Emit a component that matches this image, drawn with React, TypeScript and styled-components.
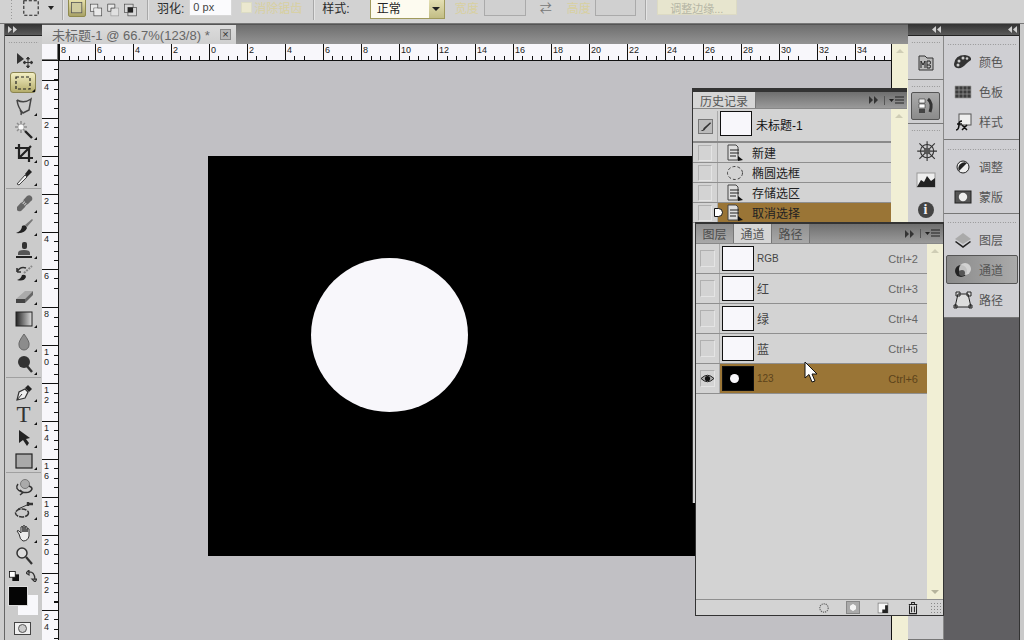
import React from 'react';
import styled, { createGlobalStyle } from 'styled-components';

const GlobalStyle = createGlobalStyle`
    html, body { margin: 0; padding: 0; background: #c1c0c4; }
    * { box-sizing: border-box; }
`;

const FONT = `"Liberation Sans", "Noto Sans CJK SC", sans-serif`;

const Icon = ({ size = 20, children }: { size?: number, children: React.ReactNode }) => (
    <svg width={size} height={size} viewBox="0 0 20 20">{children}</svg>
);

// ---- toolbox drawings
const toolIcons: { [key: string]: React.ReactNode } = {
    move: <><path d="M3 3 L3 14 L10 9 Z" fill="#333" /><path d="M14 8 V17 M10 12.5 H18 M14 7 L12.5 9 H15.5 Z M14 18 L12.5 16 H15.5 Z M9 12.5 L11 11 V14 Z M19 12.5 L17 11 V14 Z" stroke="#333" strokeWidth="1" fill="#333" /></>,
    marquee: <rect x="3" y="4" width="14" height="12" fill="none" stroke="#222" strokeWidth="1.2" strokeDasharray="3 2" />,
    lasso: <path d="M3 4 Q10 8 17 3 L15 14 L9 17 Q4 12 3 4 M6 14 Q8 16 7 19" fill="none" stroke="#444" strokeWidth="1.5" />,
    wand: <><path d="M11 11 L18 18" stroke="#222" strokeWidth="2.4" /><path d="M7 1 V13 M1 7 H13 M3 3 L11 11 M11 3 L3 11" stroke="#8f8f8f" strokeWidth="1.5" /><circle cx="7" cy="7" r="2.6" fill="#fafafa" /></>,
    crop: <path d="M5 1 V15 H19 M1 5 H15 V19 M5 15 L17 3" fill="none" stroke="#222" strokeWidth="2.2" />,
    dropper: <><path d="M3 17 L11 8 L13 10 L5 18 Z" fill="#eee" stroke="#444" /><path d="M11 7 L15 2 L18 5 L13 10 Z" fill="#222" /></>,
    heal: <><path d="M3 14 L13 3 Q16 1 18 4 Q19 7 17 8 L7 18 Q4 19 3 17 Z" fill="#666" /><path d="M8 8 L13 13" stroke="#ccc" strokeWidth="3" strokeDasharray="1 1" /></>,
    brush: <><path d="M11 9 L18 3 L19 4 L13 11 Z" fill="#777" /><path d="M2 17 Q8 15 8 10 Q12 8 13 12 Q11 18 2 17 Z" fill="#222" /></>,
    stamp: <><rect x="8" y="2" width="5" height="7" rx="2" fill="#333" /><path d="M4 13 Q4 10 10 10 Q16 10 16 13 V15 H4 Z" fill="#555" /><rect x="2" y="16" width="16" height="2" fill="#222" /></>,
    historyBrush: <><path d="M3 17 Q7 16 8 12 Q12 11 12 14 Q10 19 3 17 Z" fill="#222" /><path d="M10 10 L18 3" stroke="#888" strokeWidth="2" strokeDasharray="2 1" /><path d="M3 9 Q6 3 12 5 M3 9 L3 5 M3 9 L7 9" fill="none" stroke="#333" strokeWidth="1.6" /></>,
    eraser: <><path d="M2 13 L11 5 H19 L11 13 Z" fill="#aaa" /><path d="M2 13 H11 V17 H2 Z" fill="#444" /><path d="M11 13 L19 5 V9 L11 17 Z" fill="#666" /></>,
    gradient: <><defs><linearGradient id="grad" x1="0" x2="1"><stop offset="0" stopColor="#222" /><stop offset="1" stopColor="#ddd" /></linearGradient></defs><rect x="2" y="3" width="16" height="14" fill="url(#grad)" stroke="#222" /></>,
    blur: <path d="M10 2 Q16 10 15 13 A5 5 0 0 1 5 13 Q4 10 10 2 Z" fill="#8c8c8c" stroke="#666" />,
    burn: <><circle cx="10" cy="7" r="6" fill="#333" /><path d="M13 11 L18 17" stroke="#333" strokeWidth="2.5" /></>,
    pen: <><path d="M3 17 L5 9 L11 6 L14 9 L11 15 Z" fill="#eee" stroke="#333" strokeWidth="1.2" /><path d="M11 5 L14 2 L18 6 L15 9 Z" fill="#222" /><path d="M3 17 L8 11" stroke="#333" /></>,
    pathSelect: <path d="M5 2 L5 15 L9 12 L13 18 L15 15 L12 11 L16 10 Z" fill="#222" />,
    rect: <rect x="2" y="3" width="16" height="14" fill="#a9a9a9" stroke="#222" strokeWidth="1.2" />,
    rotate3d: <><circle cx="11" cy="6" r="4.5" fill="#aaa" stroke="#777" /><path d="M4 6 Q0 11 8 14 Q16 16 18 11 Q18 9 15 8 M6 12 L9 14.5 L6 17" fill="none" stroke="#333" strokeWidth="1.5" /></>,
    orbit3d: <><ellipse cx="8" cy="13" rx="6.5" ry="4" fill="none" stroke="#333" strokeWidth="1.5" strokeDasharray="5 1" /><path d="M13 4 H19 M14 2 V6" stroke="#333" strokeWidth="2.4" /><path d="M4 9 L13 5" stroke="#333" /></>,
    hand: <path d="M5 11 L3 8 Q4 7 5 8 L7 10 V4 Q8 3 9 4 V9 V3 Q10 2 11 3 V9 V4 Q12 3 13 4 V9 V6 Q14 5 15 6 V13 Q14 18 9 18 Q6 17 5 11 Z" fill="#eee" stroke="#333" />,
    zoom: <><circle cx="8" cy="7" r="5" fill="#ddd" stroke="#333" strokeWidth="1.5" /><path d="M12 11 L18 18" stroke="#333" strokeWidth="2.2" /></>,
};

type ToolDef = [string, boolean];

const toolGroups: { rowHeight: number, top: number, tools: ToolDef[] }[] = [
    { rowHeight: 23.4, top: 4, tools: [['move', false], ['marquee', true], ['lasso', true], ['wand', true], ['crop', true], ['dropper', true]] },
    { rowHeight: 23.1, top: 2.5, tools: [['heal', true], ['brush', true], ['stamp', true], ['historyBrush', true], ['eraser', true], ['gradient', true], ['blur', true], ['burn', true]] },
    { rowHeight: 22.8, top: 3.6, tools: [['pen', true], ['type', true], ['pathSelect', true], ['rect', true]] },
    { rowHeight: 22.8, top: 2.8, tools: [['rotate3d', true], ['orbit3d', true], ['hand', true], ['zoom', false]] },
];

const modeIcons: React.ReactNode[] = [
    <rect x="3" y="3" width="13" height="13" fill="#cfcba0" stroke="#555" />,
    <><rect x="1" y="1" width="11" height="11" fill="#e8e8e8" stroke="#444" /><rect x="6" y="7" width="12" height="12" fill="#e8e8e8" stroke="#444" /><rect x="6.5" y="7.5" width="5" height="4" fill="#e8e8e8" /></>,
    <><rect x="6" y="7" width="12" height="12" fill="#e0e0e0" stroke="#999" /><path d="M1 12 V1 H12 V7 H6 V12 Z" fill="#e8e8e8" stroke="#333" /></>,
    <><rect x="1" y="1" width="13" height="13" fill="#d8d8d8" stroke="#444" /><rect x="6" y="6" width="13" height="13" fill="#d8d8d8" stroke="#444" /><rect x="6" y="6" width="8" height="8" fill="#222" /></>,
];

const Arrows = ({ left }: { left?: boolean }) => (
    <svg width="9" height="7" viewBox="0 0 9 7">
        <path d={left ? 'M4 0 L0 3.5 L4 7 Z M9 0 L5 3.5 L9 7 Z' : 'M0 0 L4 3.5 L0 7 Z M5 0 L9 3.5 L5 7 Z'} fill="#d0d0d0" />
    </svg>
);

const PanelMenu = () => (
    <PanelControls>
        <svg width="9" height="8" viewBox="0 0 9 8"><path d="M0 0 L4 4 L0 8 Z M5 0 L9 4 L5 8 Z" fill="#333" /></svg>
        <ControlSep />
        <svg width="15" height="9" viewBox="0 0 15 9"><path d="M0 3 H5 L2.5 6 Z" fill="#222" /><path d="M6 1 H15 M6 4 H15 M6 7 H15" stroke="#222" strokeWidth="1.2" /></svg>
    </PanelControls>
);

const HRULER = [8, 6, 4, 2, 0, 2, 4, 6, 8, 10, 12, 14, 16, 18, 20, 22, 24, 26, 28, 30, 32, 34];
const VRULER = [4, 2, 0, 2, 4, 6, 8, 10, 12, 14, 16, 18, 20, 22, 24];

const HISTORY = [
    { label: '新建', kind: 'doc' },
    { label: '椭圆选框', kind: 'ellipse' },
    { label: '存储选区', kind: 'doc' },
    { label: '取消选择', kind: 'doc', active: true },
];

const CHANNELS = [
    { name: 'RGB', key: 'Ctrl+2' },
    { name: '红', key: 'Ctrl+3', cjk: true },
    { name: '绿', key: 'Ctrl+4', cjk: true },
    { name: '蓝', key: 'Ctrl+5', cjk: true },
    { name: '123', key: 'Ctrl+6', selected: true },
];

const DocIcon = () => (
    <svg width="18" height="18" viewBox="0 0 18 18">
        <path d="M2 1 H10 L12 3 V16 H2 Z" fill="#ddd" stroke="#444" />
        <path d="M4 6 H13 M4 9 H13 M4 12 H10" stroke="#222" strokeWidth="1.2" />
        <path d="M12 12 L17 16 L12 17 Z" fill="#111" />
    </svg>
);

const EllipseIcon = () => (
    <svg width="18" height="18" viewBox="0 0 18 18">
        <ellipse cx="9" cy="9" rx="7.5" ry="6.5" fill="none" stroke="#444" strokeDasharray="3 2" />
    </svg>
);

const dockColors = [
    { label: '颜色', icon: <><path d="M1 12 Q2 3 12 3 Q19 4 18 8 Q15 10 13 12 Q9 17 4 16 Q1 15 1 12 Z" fill="#333" /><circle cx="6" cy="9" r="1.5" fill="#ccc" /><circle cx="10" cy="6" r="1.5" fill="#ccc" /><circle cx="14" cy="6.5" r="1.3" fill="#ccc" /><circle cx="5" cy="13" r="1.5" fill="#ccc" /></> },
    { label: '色板', icon: <path d="M2 4 H18 V16 H2 Z M6 4 V16 M10 4 V16 M14 4 V16 M2 8 H18 M2 12 H18" fill="#3c3c3c" stroke="#999" strokeWidth="0.7" /> },
    { label: '样式', icon: <><rect x="6" y="2" width="12" height="11" fill="#eee" stroke="#555" /><path d="M3 18 Q6 18 6 12 Q6 9 9 9 M4 12 H9 M9 13 L14 18 M14 13 L9 18" fill="none" stroke="#111" strokeWidth="1.5" /></> },
];

const dockAdjust = [
    { label: '调整', icon: <><circle cx="10" cy="10" r="6" fill="#eee" stroke="#222" /><path d="M14 6 A6 6 0 0 0 6 14 Z" fill="#222" /></> },
    { label: '蒙版', icon: <><rect x="2" y="4" width="16" height="12" fill="#555" stroke="#222" /><circle cx="10" cy="10" r="4.2" fill="#eee" /></> },
];

const dockLayers = [
    { label: '图层', icon: <><path d="M10 3 L18 9 L10 14 L2 9 Z" fill="#aaa" /><path d="M3 11 L10 16 L17 11 L18 12 L10 18 L2 12 Z" fill="#222" /></> },
    { label: '通道', icon: <><circle cx="8" cy="11" r="6" fill="#222" /><circle cx="12" cy="9" r="6" fill="#ddd" opacity="0.85" /><circle cx="9" cy="13" r="3" fill="#555" /></>, active: true },
    { label: '路径', icon: <path d="M2 17 L5 4 H15 L18 17 Z M1 15 H4 V18 H1 Z M16 15 H19 V18 H16 Z M3 2 H7 V6 H3 Z M14 2 H18 V6 H14 Z" fill="#ddd" stroke="#222" strokeWidth="1" /> },
];

const App = () => {
    return (
        <Page>
            <GlobalStyle />
            <OptionBar>
                <Grip />
                <Icon size={18}><rect x="2" y="2" width="16" height="16" fill="none" stroke="#222" strokeWidth="1.2" strokeDasharray="3.5 2" /></Icon>
                <DropCaret />
                <BarDivider $left={8} />
                <ModeButtons>
                    {modeIcons.map((icon, i) => (
                        <ModeButton key={i} $active={i === 0}>
                            <Icon size={i === 0 ? 16 : 14}>{icon}</Icon>
                        </ModeButton>
                    ))}
                </ModeButtons>
                <BarDivider $left={10} />
                <BarLabel $left={9}>羽化:</BarLabel>
                <BarInput $left={5} $width={43}>0 px</BarInput>
                <BarCheck />
                <BarLabel $left={2} $disabled>消除锯齿</BarLabel>
                <BarDivider $left={11} />
                <BarLabel $left={8}>样式:</BarLabel>
                <BarSelect>
                    正常
                    <SelectArrow />
                </BarSelect>
                <BarLabel $left={10} $disabled>宽度</BarLabel>
                <BarInput $left={5} $width={42} $disabled />
                <SwapIcon>⇄</SwapIcon>
                <BarLabel $left={15} $disabled>高度</BarLabel>
                <BarInput $left={4} $width={41} $disabled />
                <BarDivider $left={9} />
                <RefineButton>调整边缘...</RefineButton>
            </OptionBar>
            <Main>
                <LeftEdge />
                <Toolbox>
                    <DarkHeader><Arrows /></DarkHeader>
                    <DotRow />
                    {toolGroups.map((group, i) => (
                        <ToolGroup key={i} $top={group.top} $last={i === toolGroups.length - 1}>
                            {group.tools.map(([name, corner]) => (
                                <Tool key={name} $height={group.rowHeight} $selected={name === 'marquee'} $corner={corner}>
                                    {name === 'type' ? <TypeGlyph>T</TypeGlyph> : <Icon>{toolIcons[name]}</Icon>}
                                </Tool>
                            ))}
                        </ToolGroup>
                    ))}
                    <ColorChips>
                        <MiniChips>
                            <svg width="10" height="12" viewBox="0 0 12 12"><rect x="4" y="4" width="8" height="8" fill="#111" /><rect x="0.5" y="0.5" width="7" height="7" fill="#fff" stroke="#111" /></svg>
                            <svg width="11" height="12" viewBox="0 0 11 12"><path d="M2 2 Q9 1 9 10 M0 3 L3 0 V5 Z M6 9 H11 L9 12 Z" fill="none" stroke="#333" strokeWidth="1.2" /></svg>
                        </MiniChips>
                        <BackChip><ForeChip /></BackChip>
                    </ColorChips>
                    <MaskMode><MaskCircle /></MaskMode>
                </Toolbox>
                <DocColumn>
                    <TabStrip>
                        <DocTab>
                            未标题-1 @ 66.7%(123/8) *
                            <TabClose>×</TabClose>
                        </DocTab>
                    </TabStrip>
                    <Workspace>
                        <RulerArea>
                            <TopRulerRow>
                                <RulerCorner />
                                <HRuler>
                                    {HRULER.map((n, i) => <HSeg key={i} $first={i === 0}>{n}</HSeg>)}
                                </HRuler>
                            </TopRulerRow>
                            <BodyRow>
                                <VRuler>
                                    <VStart />
                                    {VRULER.map((n, i) => <VSeg key={i}><VNum>{n}</VNum></VSeg>)}
                                </VRuler>
                                <Canvas>
                                    <Document>
                                        <Circle />
                                    </Document>
                                </Canvas>
                            </BodyRow>
                        </RulerArea>
                        <PaleBar>
                            <ScrollUp />
                        </PaleBar>
                    </Workspace>
                </DocColumn>
                <Dock>
                    <DockHeaders>
                        <DockHeadA><Arrows left /></DockHeadA>
                        <DockHeadB><Arrows left /></DockHeadB>
                    </DockHeaders>
                    <DockBody>
                        <IconColumn>
                            <IconSection $height={44}>
                                <DotRow />
                                <DockIconButton $top={5}>
                                    <Icon size={20}><path d="M3 3 H9 L11 5 H17 V17 H3 Z" fill="#bbb" stroke="#333" /><path d="M5 15 V8 L7 12 L9 8 V15 M11 8 V15 H14 Q15 13 14 12 H11 M11 8 H14 Q15 10 14 11" fill="none" stroke="#222" strokeWidth="1" /></Icon>
                                </DockIconButton>
                            </IconSection>
                            <IconSection $height={44}>
                                <DotRow />
                                <DockIconButton $active $top={4}>
                                    <Icon size={20}><path d="M3 3 H9 V7 H3 Z" fill="#eee" stroke="#333" strokeWidth="0.6" /><path d="M3 8 H9 V12 H3 Z" fill="#fff" stroke="#333" strokeWidth="0.6" /><path d="M3 13 H9 V17 H3 Z" fill="#444" /><path d="M12 3 Q17 7 14 16" fill="none" stroke="#333" strokeWidth="3" /></Icon>
                                </DockIconButton>
                            </IconSection>
                            <IconSection>
                                <DotRow />
                                <IconStack>
                                    <Icon size={22}><path d="M11 2 V20 M2 11 H20 M4 4 L18 18 M18 4 L4 18" stroke="#333" /><circle cx="11" cy="11" r="6" fill="none" stroke="#333" /><circle cx="11" cy="11" r="3" fill="#555" /></Icon>
                                    <Icon size={20}><rect x="1" y="3" width="18" height="14" fill="#eee" stroke="#999" /><path d="M1 17 L5 10 L8 12 L11 6 L15 11 L19 8 V17 Z" fill="#222" /></Icon>
                                    <InfoIcon>i</InfoIcon>
                                </IconStack>
                            </IconSection>
                        </IconColumn>
                        <LabelColumn>
                            <LabelSection $height={104} $top={2}>
                                <DotRow />
                                {dockColors.map(item => (
                                    <DockItem key={item.label}><Icon size={20}>{item.icon}</Icon><DockLabel>{item.label}</DockLabel></DockItem>
                                ))}
                            </LabelSection>
                            <LabelSection $height={74} $top={3}>
                                <DotRow />
                                {dockAdjust.map(item => (
                                    <DockItem key={item.label}><Icon size={20}>{item.icon}</Icon><DockLabel>{item.label}</DockLabel></DockItem>
                                ))}
                            </LabelSection>
                            <LabelSection $height={104} $top={2}>
                                <DotRow />
                                {dockLayers.map(item => (
                                    <DockItem key={item.label} $active={item.active}><Icon size={20}>{item.icon}</Icon><DockLabel>{item.label}</DockLabel></DockItem>
                                ))}
                            </LabelSection>
                            <DockFill />
                        </LabelColumn>
                    </DockBody>
                </Dock>
                <RightEdge />

                <HistoryPanel>
                    <PanelHead $tall={17}>
                        <PanelTab $active>历史记录</PanelTab>
                        <PanelMenu />
                    </PanelHead>
                    <HistoryBody>
                        <HistoryList>
                            <SnapshotRow>
                                <EyeCell $width={25}>
                                    <SnapBrush>
                                        <svg width="14" height="14" viewBox="0 0 14 14"><path d="M2 11 Q5 10 5 8 L12 2 L13 3 L7 9 Q6 12 2 11 Z" fill="#333" /></svg>
                                    </SnapBrush>
                                </EyeCell>
                                <Thumb $width={32} $height={25} />
                                <SnapshotName>未标题-1</SnapshotName>
                            </SnapshotRow>
                            {HISTORY.map(item => (
                                <HistoryRow key={item.label}>
                                    <EyeCell $width={25}>
                                        <VisBox $size={14} />
                                    </EyeCell>
                                    <HistoryEntry $active={item.active}>
                                        {item.active && <StateMarker />}
                                        {item.kind === 'doc' ? <DocIcon /> : <EllipseIcon />}
                                        <HistoryText>{item.label}</HistoryText>
                                    </HistoryEntry>
                                </HistoryRow>
                            ))}
                        </HistoryList>
                        <PaleBar>
                            <ScrollUp />
                        </PaleBar>
                    </HistoryBody>
                </HistoryPanel>

                <ChannelPanel>
                    <PanelHead $tall={20}>
                        <PanelTab>图层</PanelTab>
                        <PanelTab $active $wide>通道</PanelTab>
                        <PanelTab>路径</PanelTab>
                        <PanelMenu />
                    </PanelHead>
                    <ChannelBody>
                        <ChannelList>
                            {CHANNELS.map(c => (
                                <ChannelRow key={c.name} $selected={c.selected}>
                                    <EyeCell $width={24}>
                                        <VisBox $size={15}>
                                            {c.selected && (
                                                <svg width="13" height="9" viewBox="0 0 13 9"><path d="M0 4.5 Q6.5 -2 13 4.5 Q6.5 11 0 4.5 Z" fill="#aaa" stroke="#222" /><circle cx="6.5" cy="4.5" r="2.6" fill="#111" /></svg>
                                            )}
                                        </VisBox>
                                    </EyeCell>
                                    <Thumb $width={32} $height={25} $black={c.selected}>
                                        {c.selected && <ThumbDot />}
                                    </Thumb>
                                    <ChannelName $selected={c.selected} $cjk={c.cjk}>{c.name}</ChannelName>
                                    <ChannelKey $selected={c.selected}>{c.key}</ChannelKey>
                                </ChannelRow>
                            ))}
                        </ChannelList>
                        <PaleBar $between>
                            <ScrollUp />
                            <ScrollDown />
                        </PaleBar>
                    </ChannelBody>
                    <ChannelFooter>
                        <Icon size={12}><circle cx="10" cy="10" r="7" fill="none" stroke="#666" strokeWidth="2" strokeDasharray="2 1.5" /></Icon>
                        <FooterMask />
                        <Icon size={14}><rect x="3" y="3" width="14" height="14" fill="#f8f8f8" stroke="#777" /><path d="M9 17 H17 V6 H13 V12 H9 Z" fill="#222" /></Icon>
                        <Icon size={14}><path d="M4 5 H16 M8 5 V2 H12 V5 M5 6 V18 H15 V6" fill="#ddd" stroke="#222" strokeWidth="1.5" /><path d="M8 8 V16 M12 8 V16" stroke="#222" strokeWidth="1.5" /></Icon>
                        <ResizeGrip />
                    </ChannelFooter>
                </ChannelPanel>

                <Pointer>
                    <svg width="14" height="23" viewBox="0 0 14 23"><path d="M1 1 V17 L5 13.5 L8 21 L11 20 L8 13 L13 13 Z" fill="#fff" stroke="#111" strokeWidth="1" /></svg>
                </Pointer>
            </Main>
        </Page>
    )
}

export default App;

const Page = styled.div`
    width: 1024px;
    height: 640px;
    overflow: hidden;
    display: flex;
    flex-direction: column;
    font-family: ${FONT};
    background: #d1d1d1;
`;

const OptionBar = styled.div`
    height: 24px;
    flex: none;
    display: flex;
    align-items: center;
    padding: 0 0 8px 10px;
    background: #d2d2d2;
    border-bottom: 1px solid #777;
`;
const Grip = styled.div`
    width: 3px;
    height: 24px;
    margin-right: 9px;
    background: radial-gradient(#999 35%, transparent 40%) 0 0 / 3px 3px;
`;
const DropCaret = styled.div`
    margin-left: 8px;
    border-left: 3.5px solid transparent;
    border-right: 3.5px solid transparent;
    border-top: 4px solid #222;
`;
const BarDivider = styled.div<{ $left: number }>`
    width: 1px;
    height: 24px;
    margin-left: ${p => p.$left}px;
    background: #a8a8a8;
    box-shadow: 1px 0 0 #e4e4e4;
`;
const ModeButtons = styled.div`
    display: flex;
    gap: 4px;
    margin-left: 5px;
`;
const ModeButton = styled.div<{ $active?: boolean }>`
    width: ${p => p.$active ? 18 : 13}px;
    height: 20px;
    margin-bottom: 2px;
    display: flex;
    align-items: flex-end;
    justify-content: center;
    border: ${p => p.$active ? '1px solid #8f8a4e' : 'none'};
    border-radius: 2px;
    background: ${p => p.$active ? 'linear-gradient(#efe9b4, #a9a266)' : 'transparent'};
`;
const BarLabel = styled.div<{ $left: number, $disabled?: boolean }>`
    margin-left: ${p => p.$left}px;
    font-size: 12px;
    white-space: nowrap;
    color: ${p => p.$disabled ? '#d8d0a0' : '#2a2a2a'};
`;
const BarInput = styled.div<{ $left: number, $width: number, $disabled?: boolean }>`
    width: ${p => p.$width}px;
    height: 20px;
    margin-left: ${p => p.$left}px;
    margin-bottom: 4px;
    padding: 4px 3px 0;
    font-size: 11px;
    color: #444;
    background: ${p => p.$disabled ? '#d0d0d0' : '#fbfbfd'};
    border: 1px solid ${p => p.$disabled ? '#aaa' : '#d8d8d8'};
`;
const BarCheck = styled.div`
    width: 11px;
    height: 11px;
    margin-left: 9px;
    background: #ebe8cf;
    border: 1px solid #dcdcc4;
`;
const BarSelect = styled.div`
    width: 75px;
    height: 22px;
    margin-left: 20px;
    padding-left: 6px;
    display: flex;
    align-items: center;
    position: relative;
    font-size: 12px;
    color: #222;
    background: #fdfbf0;
    border: 1px solid #a09a5c;
`;
const SelectArrow = styled.div`
    position: absolute;
    right: 0;
    top: 0;
    bottom: 0;
    width: 15px;
    background: linear-gradient(#e8e3b8, #c2bd85);
    &::after {
        content: '';
        position: absolute;
        left: 3px;
        top: 9px;
        border-left: 4px solid transparent;
        border-right: 4px solid transparent;
        border-top: 4px solid #222;
    }
`;
const SwapIcon = styled.div`
    margin-left: 14px;
    width: 12px;
    font-size: 12px;
    color: #777;
`;
const RefineButton = styled.div`
    width: 80px;
    height: 20px;
    margin-left: 11px;
    margin-bottom: 6px;
    padding-top: 4px;
    text-align: center;
    font-size: 11px;
    color: #b5b5a5;
    background: #e7e5ce;
    border: 1px solid #dcdac4;
`;

const Main = styled.div`
    position: relative;
    flex: 1;
    min-height: 0;
    display: flex;
`;
const LeftEdge = styled.div`
    width: 5px;
    flex: none;
    background: #cdcdcd;
    border-right: 1px solid #666;
`;
const Toolbox = styled.div`
    width: 37px;
    flex: none;
    display: flex;
    flex-direction: column;
    background: #cbcbcb;
`;
const DarkHeader = styled.div`
    height: 12px;
    flex: none;
    display: flex;
    align-items: center;
    padding-left: 3px;
    background: linear-gradient(#333, #5a5a5a);
    border-bottom: 1px solid #222;
`;
const DotRow = styled.div`
    height: 3px;
    flex: none;
    margin: 5px 3px 0;
    background: radial-gradient(#8a8a8a 40%, transparent 45%) 0 0 / 2.5px 3px;
`;
const ToolGroup = styled.div<{ $last?: boolean, $top: number }>`
    flex: none;
    padding-top: ${p => p.$top}px;
    border-bottom: ${p => p.$last ? 'none' : '1px solid #a0a0a0'};
    margin: 0 1px;
`;
const Tool = styled.div<{ $height: number, $selected?: boolean, $corner?: boolean }>`
    position: relative;
    height: ${p => p.$height}px;
    display: flex;
    align-items: center;
    justify-content: center;
    ${p => p.$selected && `
        height: 21px;
        margin: 1px 5px 1.4px 4px;
        background: linear-gradient(#f3efc4, #b5ad6c);
        border: 1px solid #8b8550;
        border-radius: 3px;
    `}
    &::after {
        content: '';
        display: ${p => p.$corner ? 'block' : 'none'};
        position: absolute;
        right: ${p => p.$selected ? 0 : 4}px;
        bottom: ${p => p.$selected ? 0 : 2}px;
        border-left: 3px solid transparent;
        border-bottom: 3px solid #111;
    }
`;
const TypeGlyph = styled.div`
    font-family: "Liberation Serif", serif;
    font-size: 23px;
    line-height: 22px;
    color: #333;
`;
const ColorChips = styled.div`
    height: 45px;
    margin: 3px 0 0 3px;
`;
const MiniChips = styled.div`
    display: flex;
    gap: 7px;
    margin-left: 1px;
`;
const BackChip = styled.div`
    position: relative;
    width: 20px;
    height: 20px;
    margin: 13px 0 0 10px;
    background: #f8f8fb;
`;
const ForeChip = styled.div`
    position: absolute;
    left: -10px;
    top: -9px;
    width: 20px;
    height: 20px;
    background: #050505;
    border: 1px solid #ddd;
`;
const MaskMode = styled.div`
    width: 17px;
    height: 13px;
    margin: 7px 0 0 9px;
    display: flex;
    align-items: center;
    justify-content: center;
    background: #f0f0f0;
    border: 1px solid #444;
`;
const MaskCircle = styled.div`
    width: 9px;
    height: 9px;
    border-radius: 50%;
    background: #ccc;
    border: 1px solid #555;
`;

const DocColumn = styled.div`
    flex: 1;
    min-width: 0;
    display: flex;
    flex-direction: column;
`;
const TabStrip = styled.div`
    height: 20px;
    flex: none;
    display: flex;
    background: linear-gradient(#6e6e6e, #939393);
    border-top: 1px solid #555;
`;
const DocTab = styled.div`
    width: 194px;
    display: flex;
    align-items: center;
    padding-left: 10px;
    font-size: 13px;
    color: #666;
    white-space: nowrap;
    background: linear-gradient(#dcdcdc, #cfcfcf);
`;
const TabClose = styled.div`
    width: 11px;
    height: 11px;
    margin-left: auto;
    margin-right: 5px;
    font-size: 11px;
    line-height: 9px;
    text-align: center;
    color: #333;
    background: #b5b5b5;
    border: 1px solid #888;
`;
const Workspace = styled.div`
    flex: 1;
    min-height: 0;
    display: flex;
`;
const RulerArea = styled.div`
    flex: 1;
    min-width: 0;
    display: flex;
    flex-direction: column;
    border-right: 1px solid #111;
`;
const TopRulerRow = styled.div`
    height: 17px;
    flex: none;
    display: flex;
    border-bottom: 1px solid #111;
`;
const RulerCorner = styled.div`
    width: 17px;
    flex: none;
    background: #f8f7fb;
    border-right: 1px solid #111;
    box-shadow: inset -4px -4px 0 -3px #777;
`;
const HRuler = styled.div`
    flex: 1;
    min-width: 0;
    display: flex;
    overflow: hidden;
    background: #f8f7fb;
`;
const HSeg = styled.div<{ $first?: boolean }>`
    width: ${p => p.$first ? 36 : 38}px;
    flex: none;
    padding: 0 0 0 1px;
    font-size: 9px;
    line-height: 13px;
    color: #222;
    border-left: 1px solid #111;
    background: repeating-linear-gradient(90deg, transparent 0 8.5px, #111 8.5px 9.5px) left bottom / 100% 4px no-repeat;
`;
const BodyRow = styled.div`
    flex: 1;
    min-height: 0;
    display: flex;
`;
const VRuler = styled.div`
    width: 17px;
    flex: none;
    overflow: hidden;
    background: #f8f7fb;
    border-right: 1px solid #111;
`;
const VStart = styled.div`
    height: 19px;
    background: repeating-linear-gradient(180deg, transparent 0 8.5px, #111 8.5px 9.5px) right top / 4px 100% no-repeat;
`;
const VSeg = styled.div`
    height: 37.9px;
    padding: 1px 0 0 2px;
    border-top: 1px solid #111;
    background: repeating-linear-gradient(180deg, transparent 0 8.5px, #111 8.5px 9.5px) right top / 4px 100% no-repeat;
`;
const VNum = styled.div`
    width: 6px;
    font-size: 9px;
    line-height: 10px;
    word-break: break-all;
    color: #222;
`;
const Canvas = styled.div`
    flex: 1;
    min-width: 0;
    overflow: hidden;
    padding: 95px 0 0 149px;
    background: #c1c0c4;
`;
const Document = styled.div`
    width: 600px;
    height: 400px;
    padding: 102px 0 0 103px;
    background: #000;
`;
const Circle = styled.div`
    width: 157px;
    height: 154px;
    border-radius: 50%;
    background: #f8f7fb;
`;
const PaleBar = styled.div<{ $between?: boolean }>`
    width: 16px;
    flex: none;
    display: flex;
    flex-direction: column;
    justify-content: ${p => p.$between ? 'space-between' : 'flex-start'};
    align-items: center;
    padding: 5px 0;
    background: #f1efd5;
`;
const ScrollUp = styled.div`
    border-left: 4px solid transparent;
    border-right: 4px solid transparent;
    border-bottom: 4px solid #cfcdb5;
`;
const ScrollDown = styled.div`
    border-left: 4px solid transparent;
    border-right: 4px solid transparent;
    border-top: 4px solid #b5b39c;
`;

const Dock = styled.div`
    width: 111px;
    flex: none;
    display: flex;
    flex-direction: column;
`;
const DockHeaders = styled.div`
    height: 12px;
    flex: none;
    display: flex;
`;
const DockHeadA = styled.div`
    width: 36px;
    display: flex;
    align-items: center;
    justify-content: flex-end;
    padding-right: 3px;
    background: linear-gradient(#333, #5a5a5a);
    border-bottom: 1px solid #222;
`;
const DockHeadB = styled(DockHeadA)`
    flex: 1;
    width: auto;
    padding-right: 2px;
`;
const DockBody = styled.div`
    flex: 1;
    min-height: 0;
    display: flex;
`;
const IconColumn = styled.div`
    width: 36px;
    flex: none;
    display: flex;
    flex-direction: column;
    background: #605f62;
`;
const IconSection = styled.div<{ $height?: number }>`
    ${p => p.$height ? `height: ${p.$height}px;` : 'flex: 1;'}
    flex-shrink: 0;
    background: #cfcfd1;
    border-bottom: 1px solid #777;
    border-right: 1px solid #888;
`;
const DockIconButton = styled.div<{ $active?: boolean, $top: number }>`
    display: flex;
    align-items: center;
    justify-content: center;
    height: 28px;
    margin: ${p => p.$top}px 3px 0;
    border-radius: 2px;
    ${p => p.$active && `
        background: linear-gradient(#aaa, #8b8b8b);
        border: 1px solid #555;
    `}
`;
const IconStack = styled.div`
    display: flex;
    flex-direction: column;
    align-items: center;
    gap: 9px;
    padding-top: 7px;
`;
const InfoIcon = styled.div`
    width: 16px;
    height: 16px;
    margin-top: 3px;
    border-radius: 50%;
    text-align: center;
    font-family: "Liberation Serif", serif;
    font-weight: bold;
    font-size: 14px;
    line-height: 16px;
    color: #eee;
    background: #444;
`;
const LabelColumn = styled.div`
    width: 75px;
    flex: none;
    display: flex;
    flex-direction: column;
`;
const LabelSection = styled.div<{ $height: number, $top: number }>`
    height: ${p => p.$height}px;
    flex: none;
    background: #cfcfd3;
    border-bottom: 1px solid #777;
    padding-top: ${p => p.$top}px;
`;
const DockItem = styled.div<{ $active?: boolean }>`
    height: 29px;
    margin: 1px 1px 0 2px;
    display: flex;
    align-items: center;
    gap: 6px;
    padding-left: 7px;
    border-radius: 2px;
    ${p => p.$active && `
        background: linear-gradient(90deg, #8b8b8b, #aaa);
        border: 1px solid #555;
        padding-left: 6px;
    `}
`;
const DockLabel = styled.div`
    font-size: 12px;
    color: #555;
`;
const DockFill = styled.div`
    flex: 1;
    background: #605f62;
`;
const RightEdge = styled.div`
    width: 5px;
    flex: none;
    background: #c9c9c9;
    border-left: 1px solid #333;
`;

const FloatingPanel = styled.div`
    position: absolute;
    display: flex;
    flex-direction: column;
    background: #d3d3d3;
`;
const HistoryPanel = styled(FloatingPanel)`
    left: 692px;
    top: 64px;
    width: 215px;
    height: 415px;
    border-left: 1px solid #333;
    border-top: 4px solid #333;
`;
const ChannelPanel = styled(FloatingPanel)`
    left: 695px;
    top: 198px;
    width: 249px;
    height: 394px;
    border: 1px solid #333;
    border-top-width: 2px;
`;
const PanelHead = styled.div<{ $tall: number }>`
    height: ${p => p.$tall}px;
    flex: none;
    display: flex;
    align-items: stretch;
    background: linear-gradient(#6f6f6f, #9a9a9a);
    border-bottom: 1px solid #888;
`;
const PanelTab = styled.div<{ $active?: boolean, $wide?: boolean }>`
    width: ${p => p.$active && !p.$wide ? 'auto' : '38px'};
    padding: 0 ${p => p.$active && !p.$wide ? 7 : 0}px;
    display: flex;
    align-items: center;
    justify-content: center;
    font-size: 12px;
    color: ${p => p.$active ? '#555' : '#4c4c4c'};
    background: ${p => p.$active ? '#d6d6d6' : 'linear-gradient(#8f8f8f, #a8a8a8)'};
    border-right: 1px solid #777;
`;
const PanelControls = styled.div`
    margin-left: auto;
    display: flex;
    align-items: center;
    gap: 4px;
    padding-right: 3px;
`;
const ControlSep = styled.div`
    width: 1px;
    height: 9px;
    margin: 0 0 0 2px;
    background: #555;
`;
const HistoryBody = styled.div`
    flex: 1;
    min-height: 0;
    display: flex;
`;
const HistoryList = styled.div`
    flex: 1;
    min-width: 0;
    display: flex;
    flex-direction: column;
`;
const SnapshotRow = styled.div`
    height: 34px;
    flex: none;
    display: flex;
    align-items: flex-start;
    padding-top: 2px;
    border-bottom: 2px solid #8a8a8a;
`;
const EyeCell = styled.div<{ $width: number }>`
    width: ${p => p.$width}px;
    flex: none;
    align-self: stretch;
    display: flex;
    align-items: center;
    justify-content: center;
    background: #d3d3d3;
    border-right: 1px solid #aaa;
`;
const SnapBrush = styled.div`
    width: 15px;
    height: 15px;
    display: flex;
    background: #bbb;
    border: 1px solid #777;
`;
const Thumb = styled.div<{ $width: number, $height: number, $black?: boolean }>`
    width: ${p => p.$width}px;
    height: ${p => p.$height}px;
    flex: none;
    margin-left: 2px;
    display: flex;
    align-items: center;
    padding-left: 7px;
    background: ${p => p.$black ? '#000' : '#f8f7fb'};
    border: 1px solid #111;
`;
const ThumbDot = styled.div`
    width: 9px;
    height: 9px;
    border-radius: 50%;
    background: #f8f7fb;
`;
const SnapshotName = styled.div`
    margin: 5px 0 0 4px;
    font-size: 12px;
    color: #111;
`;
const HistoryRow = styled.div`
    height: 20px;
    flex: none;
    display: flex;
    border-bottom: 1px solid #8f8f8f;
`;
const VisBox = styled.div<{ $size: number }>`
    width: ${p => p.$size}px;
    height: ${p => p.$size + 2}px;
    display: flex;
    align-items: center;
    justify-content: center;
    border: 1px solid #b0b0b0;
    border-right-color: #e4e4e4;
    border-bottom-color: #e4e4e4;
`;
const HistoryEntry = styled.div<{ $active?: boolean }>`
    position: relative;
    flex: 1;
    display: flex;
    align-items: center;
    gap: 8px;
    padding-left: 8px;
    background: ${p => p.$active ? '#9a7536' : 'transparent'};
`;
const StateMarker = styled.div`
    position: absolute;
    left: -4px;
    top: 5px;
    width: 9px;
    height: 9px;
    border: 1.5px solid #111;
    border-radius: 0 5px 5px 0;
    background: #fff;
`;
const HistoryText = styled.div`
    font-size: 12px;
    color: #222;
`;
const ChannelBody = styled.div`
    flex: 1;
    min-height: 0;
    display: flex;
`;
const ChannelList = styled.div`
    flex: 1;
    min-width: 0;
    display: flex;
    flex-direction: column;
    background: #d3d3d3;
`;
const ChannelRow = styled.div<{ $selected?: boolean }>`
    height: 30px;
    flex: none;
    display: flex;
    align-items: center;
    border-bottom: 1px solid #8f8f8f;
    background: ${p => p.$selected ? '#9a7536' : 'transparent'};
`;
const ChannelName = styled.div<{ $selected?: boolean, $cjk?: boolean }>`
    margin-left: 3px;
    font-size: ${p => p.$cjk ? 12 : 10}px;
    color: ${p => p.$selected ? '#5c431a' : '#444'};
`;
const ChannelKey = styled.div<{ $selected?: boolean }>`
    margin-left: auto;
    margin-right: 9px;
    font-size: 11px;
    color: ${p => p.$selected ? '#5c431a' : '#666'};
`;
const ChannelFooter = styled.div`
    height: 16px;
    flex: none;
    display: flex;
    align-items: center;
    justify-content: flex-end;
    gap: 16px;
    padding-right: 1px;
    border-top: 1px solid #8f8f8f;
`;
const FooterMask = styled.div`
    width: 14px;
    height: 13px;
    background: radial-gradient(circle, #f4f4f4 36%, #aaa 42%);
    border: 1px solid #888;
`;
const ResizeGrip = styled.div`
    width: 12px;
    height: 12px;
    margin-left: -6px;
    background: radial-gradient(#888 35%, transparent 40%) 0 0 / 3px 3px;
`;
const Pointer = styled.div`
    position: absolute;
    left: 804px;
    top: 337px;
`;
